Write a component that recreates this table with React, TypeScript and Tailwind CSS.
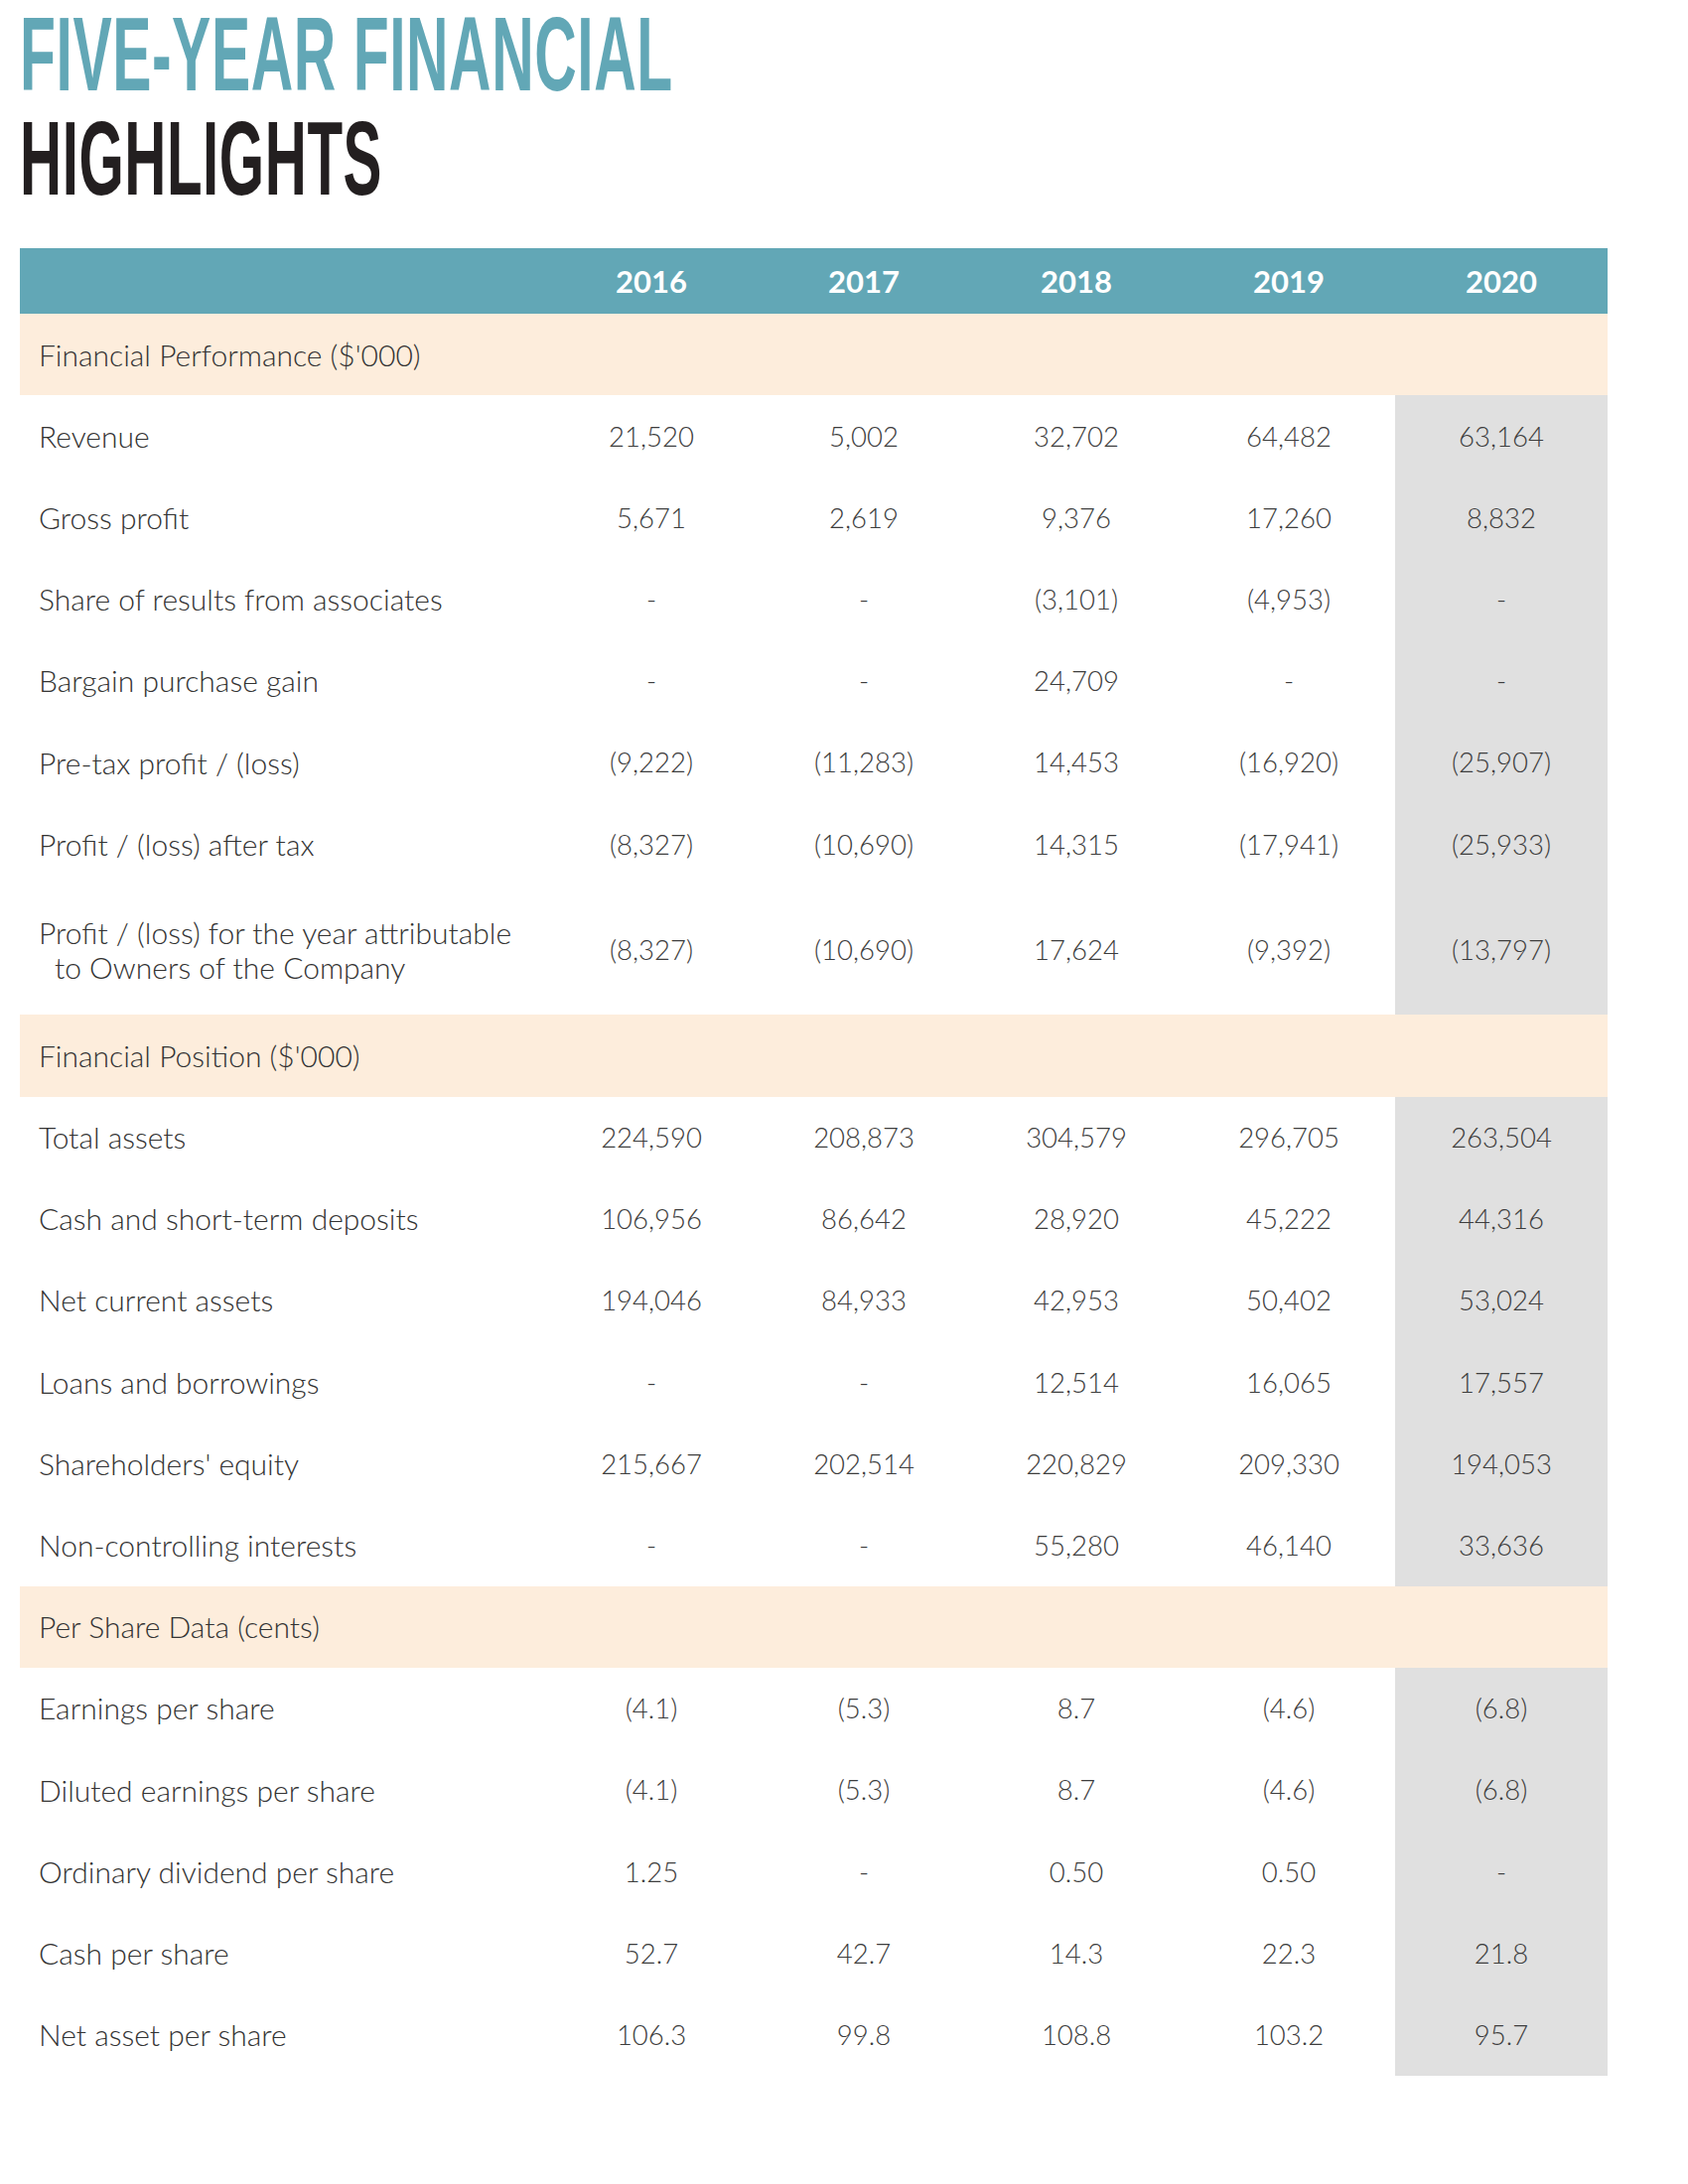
const years = ["2016", "2017", "2018", "2019", "2020"];

type Row =
  | { kind: "section"; label: string }
  | { kind: "data"; label: string; sub?: string; values: string[] };

const rows: Row[] = [
  { kind: "section", label: "Financial Performance ($'000)" },
  { kind: "data", label: "Revenue", values: ["21,520", "5,002", "32,702", "64,482", "63,164"] },
  { kind: "data", label: "Gross profit", values: ["5,671", "2,619", "9,376", "17,260", "8,832"] },
  { kind: "data", label: "Share of results from associates", values: ["-", "-", "(3,101)", "(4,953)", "-"] },
  { kind: "data", label: "Bargain purchase gain", values: ["-", "-", "24,709", "-", "-"] },
  { kind: "data", label: "Pre-tax profit / (loss)", values: ["(9,222)", "(11,283)", "14,453", "(16,920)", "(25,907)"] },
  { kind: "data", label: "Profit / (loss) after tax", values: ["(8,327)", "(10,690)", "14,315", "(17,941)", "(25,933)"] },
  {
    kind: "data",
    label: "Profit / (loss) for the year attributable",
    sub: "to Owners of the Company",
    values: ["(8,327)", "(10,690)", "17,624", "(9,392)", "(13,797)"],
  },
  { kind: "section", label: "Financial Position ($'000)" },
  { kind: "data", label: "Total assets", values: ["224,590", "208,873", "304,579", "296,705", "263,504"] },
  { kind: "data", label: "Cash and short-term deposits", values: ["106,956", "86,642", "28,920", "45,222", "44,316"] },
  { kind: "data", label: "Net current assets", values: ["194,046", "84,933", "42,953", "50,402", "53,024"] },
  { kind: "data", label: "Loans and borrowings", values: ["-", "-", "12,514", "16,065", "17,557"] },
  { kind: "data", label: "Shareholders' equity", values: ["215,667", "202,514", "220,829", "209,330", "194,053"] },
  { kind: "data", label: "Non-controlling interests", values: ["-", "-", "55,280", "46,140", "33,636"] },
  { kind: "section", label: "Per Share Data (cents)" },
  { kind: "data", label: "Earnings per share", values: ["(4.1)", "(5.3)", "8.7", "(4.6)", "(6.8)"] },
  { kind: "data", label: "Diluted earnings per share", values: ["(4.1)", "(5.3)", "8.7", "(4.6)", "(6.8)"] },
  { kind: "data", label: "Ordinary dividend per share", values: ["1.25", "-", "0.50", "0.50", "-"] },
  { kind: "data", label: "Cash per share", values: ["52.7", "42.7", "14.3", "22.3", "21.8"] },
  { kind: "data", label: "Net asset per share", values: ["106.3", "99.8", "108.8", "103.2", "95.7"] },
];

export default function App() {
  return (
    <div className="min-h-[2200px] w-[1700px] bg-white pl-5 pt-[2px] text-[#333333] font-['Lato','Open_Sans',sans-serif]">
      {/* Title */}
      <h1 className="whitespace-nowrap font-['Liberation_Sans',Arial,sans-serif] text-[106px] font-bold leading-[105px] tracking-[1px]">
        <span className="block">
          <span className="inline-block origin-left scale-x-[0.555] text-[#62a7b6]">FIVE-YEAR FINANCIAL</span>
        </span>
        <span className="block">
          <span className="inline-block origin-left scale-x-[0.55] text-[#231f20]">HIGHLIGHTS</span>
        </span>
      </h1>

      {/* Table */}
      <div className="mt-[38px] w-[1599px]">
        <div className="flex h-[66px] items-center bg-[#62a7b6]">
          <div className="w-[529px]" />
          {years.map((y) => (
            <div key={y} className="w-[214px] text-center text-[31px] font-bold text-white">
              {y}
            </div>
          ))}
        </div>

        {rows.map((r, i) =>
          r.kind === "section" ? (
            <div key={i} className="flex h-[82.2px] items-center bg-[#fdeddc] pl-[19px] text-[30px] font-light">
              {r.label}
            </div>
          ) : (
            <div key={i} className={`flex ${r.sub ? "h-[131px]" : "h-[82.2px]"} font-light`}>
              <div className="flex w-[529px] flex-col justify-center pl-[19px] text-[30px] leading-[35px]">
                <span>{r.label}</span>
                {r.sub && <span className="pl-4">{r.sub}</span>}
              </div>
              {r.values.map((v, j) => (
                <div
                  key={j}
                  className={`flex w-[214px] items-center justify-center text-[27.5px] text-[#3d3d3d] ${j === 4 ? "bg-[#e0e0e0]" : ""}`}
                >
                  {v}
                </div>
              ))}
            </div>
          )
        )}
      </div>
    </div>
  );
}
